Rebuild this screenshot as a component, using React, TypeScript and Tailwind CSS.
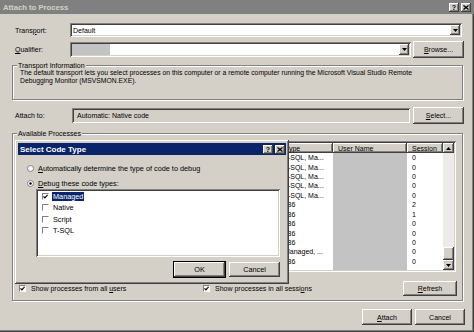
import React from 'react';

const raised =
  'shadow-[inset_-1px_-1px_#404040,inset_1px_1px_#ffffff,inset_-2px_-2px_#808080,inset_2px_2px_#d4d0c8]';
const raisedThin = 'shadow-[inset_-1px_-1px_#404040,inset_1px_1px_#ffffff,inset_-2px_-2px_#808080]';
const sunken =
  'shadow-[inset_1px_1px_#808080,inset_-1px_-1px_#ffffff,inset_2px_2px_#404040,inset_-2px_-2px_#d4d0c8]';
const etched = 'border border-[#808080] shadow-[inset_1px_1px_#ffffff,1px_1px_#ffffff]';

function Btn({ children, className = '' }: { children: React.ReactNode; className?: string }) {
  return (
    <div className={`flex items-center justify-center bg-[#d4d0c8] ${raised} ${className}`}>{children}</div>
  );
}

function DropBtn() {
  return (
    <div className={`flex h-full w-[10px] items-center justify-center bg-[#d4d0c8] ${raisedThin}`}>
      <svg width="5" height="3" viewBox="0 0 5 3">
        <path d="M0 0h5L2.5 3z" fill="#000" />
      </svg>
    </div>
  );
}

function TitleBtn({ kind }: { kind: 'help' | 'close' }) {
  return (
    <div className={`flex h-[9px] w-[10px] items-center justify-center bg-[#d4d0c8] ${raisedThin}`}>
      {kind === 'help' ? (
        <span className="text-[7px] leading-[7px] font-bold text-black">?</span>
      ) : (
        <svg width="6" height="5" viewBox="0 0 6 5">
          <path d="M0.5 0.5l5 4M5.5 0.5l-5 4" stroke="#000" strokeWidth="1.3" />
        </svg>
      )}
    </div>
  );
}

function Check({ checked }: { checked?: boolean }) {
  return (
    <div className="flex h-[7px] w-[7px] shrink-0 items-center justify-center border border-t-[#808080] border-l-[#808080] border-b-[#ffffff] border-r-[#ffffff] bg-white">
      {checked && (
        <svg width="5" height="5" viewBox="0 0 5 5">
          <path d="M0.5 2.3l1.4 1.5L4.6 0.8" stroke="#000" strokeWidth="1.2" fill="none" />
        </svg>
      )}
    </div>
  );
}

function Radio({ on }: { on?: boolean }) {
  return (
    <svg width="7" height="7" viewBox="0 0 7 7" className="shrink-0">
      <circle cx="3.5" cy="3.5" r="3" fill="#fff" stroke="#808080" strokeWidth="1" />
      {on && <circle cx="3.5" cy="3.5" r="1.2" fill="#000" />}
    </svg>
  );
}

// only the Type and Session columns show beside the code type dialog
const rows = [
  ['T-SQL, Ma...', '0'],
  ['T-SQL, Ma...', '0'],
  ['T-SQL, Ma...', '0'],
  ['T-SQL, Ma...', '0'],
  ['T-SQL, Ma...', '0'],
  ['x86', '2'],
  ['x86', '1'],
  ['x86', '0'],
  ['x86', '0'],
  ['x86', '0'],
  ['Managed, ...', '0'],
  ['x86', '0'],
];

function HeaderCell({ w, title }: { w: string; title?: string }) {
  return (
    <div className={`flex h-[10px] shrink-0 items-center bg-[#d4d0c8] pl-[5px] ${raisedThin} ${w}`}>{title}</div>
  );
}

function ProcessList() {
  return (
    <div className={`ml-[4px] mt-[7px] flex h-[131px] w-[439px] bg-white p-[2px] ${sunken}`}>
      {/* Process, ID, Title (under the dialog) */}
      <div className="flex h-full">
        <HeaderCell w="w-[112px]" />
        <HeaderCell w="w-[30px]" />
        <HeaderCell w="w-[119px]" />
      </div>
      <div className="flex h-full w-[53px] flex-col">
        <HeaderCell w="w-full" title="Type" />
        {rows.map((r, i) => (
          <div key={i} className="flex h-[9.43px] items-center whitespace-nowrap pl-[4px]">
            {r[0]}
          </div>
        ))}
      </div>
      <div className="flex h-full w-[74px] flex-col">
        <HeaderCell w="w-full" title="User Name" />
        <div className="flex-1 bg-[#c3c3c3]" />
      </div>
      <div className="flex h-full w-[36px] flex-col">
        <HeaderCell w="w-full" title="Session" />
        {rows.map((r, i) => (
          <div key={i} className="flex h-[9.43px] items-center pl-[5px]">
            {r[1]}
          </div>
        ))}
      </div>
      {/* scrollbar */}
      <div className="flex h-full w-[11px] flex-col">
        <div className={`flex h-[10px] items-center justify-center bg-[#d4d0c8] ${raisedThin}`}>
          <svg width="5" height="3" viewBox="0 0 5 3">
            <path d="M0 3h5L2.5 0z" fill="#000" />
          </svg>
        </div>
        <div className="flex flex-1 flex-col justify-end bg-[#ecebe7]">
          <div className={`h-[13px] bg-[#d4d0c8] ${raisedThin}`} />
        </div>
        <div className={`flex h-[10px] items-center justify-center bg-[#d4d0c8] ${raisedThin}`}>
          <svg width="5" height="3" viewBox="0 0 5 3">
            <path d="M0 0h5L2.5 3z" fill="#000" />
          </svg>
        </div>
      </div>
    </div>
  );
}

function CodeTypeDialog() {
  const items = ['Managed', 'Native', 'Script', 'T-SQL'];
  return (
    <div
      className={`absolute left-[15px] top-[140px] flex h-[144px] w-[274px] flex-col bg-[#d4d0c8] p-[3px] text-[7.3px] ${raised}`}
    >
      <div className="flex h-[12px] items-center bg-[#0a246a] pl-[2px] pr-[1px]">
        <span className="flex-1 text-[8px] font-bold text-white">Select Code Type</span>
        <div className="flex gap-[2px]">
          <TitleBtn kind="help" />
          <TitleBtn kind="close" />
        </div>
      </div>
      <div className="ml-[9px] mt-[9px] flex h-[9px] items-center gap-[4px]">
        <Radio />
        <span>
          <u>A</u>utomatically determine the type of code to debug
        </span>
      </div>
      <div className="ml-[9px] mt-[6px] flex h-[9px] items-center gap-[4px]">
        <Radio on />
        <span>
          <u>D</u>ebug these code types:
        </span>
      </div>
      <div className={`ml-[18px] mt-[1px] flex h-[68px] w-[244px] flex-col bg-white p-[2px] ${sunken}`}>
        {items.map((it, i) => (
          <div key={it} className="flex h-[11.3px] items-center gap-[3px] pl-[4px]">
            <Check checked={i === 0} />
            <span className={`px-[1px] ${i === 0 ? 'bg-[#0a246a] text-white' : ''}`}>{it}</span>
          </div>
        ))}
      </div>
      <div className="mr-[6px] mt-[5px] flex justify-end gap-[4px]">
        <Btn className="h-[15px] w-[51px] outline outline-1 outline-black">OK</Btn>
        <Btn className="h-[15px] w-[51px]">Cancel</Btn>
      </div>
    </div>
  );
}

export default function App() {
  return (
    <div
      className={`relative h-[332px] w-[474px] overflow-hidden bg-[#d4d0c8] font-['Liberation_Sans',Arial,sans-serif] text-[7px] leading-[9px] text-black shadow-[inset_-1px_-1px_#404040,inset_-2px_-2px_#808080]`}
    >
      {/* Title bar */}
      <div className="flex h-[14px] items-center bg-[#808080] pl-[3px] pr-[3px]">
        <span className="flex-1 text-[7.7px] font-bold text-[#d4d0c8]">Attach to Process</span>
        <div className="flex gap-[2px]">
          <TitleBtn kind="help" />
          <TitleBtn kind="close" />
        </div>
      </div>

      {/* Transport */}
      <div className="mt-[9px] flex h-[14px] items-center">
        <span className="ml-[15px] w-[55px]">
          Trans<u>p</u>ort:
        </span>
        <div className={`flex h-[14px] w-[392px] bg-white p-[2px] ${sunken}`}>
          <span className="flex flex-1 items-center pl-[1px]">Default</span>
          <DropBtn />
        </div>
      </div>

      {/* Qualifier */}
      <div className="mt-[4px] flex h-[17px] items-center">
        <span className="ml-[15px] w-[55px]">
          <u>Q</u>ualifier:
        </span>
        <div className={`flex h-[15px] w-[341px] bg-white p-[2px] ${sunken}`}>
          <div className="w-[38px] bg-[#c3c3c3]" />
          <div className="flex-1" />
          <DropBtn />
        </div>
        <Btn className="ml-[2px] h-[17px] w-[51px]">
          <span>
            <u>B</u>rowse...
          </span>
        </Btn>
      </div>

      {/* Transport Information */}
      <div className={`relative ml-[12px] mt-[7px] h-[35px] w-[451px] ${etched}`}>
        <span className="absolute left-[4px] top-[-5px] bg-[#d4d0c8] px-[1px]">Transport Information</span>
        <p className="whitespace-nowrap pl-[7px] pt-[3px] text-[6.8px] leading-[8px]">
          The default transport lets you select processes on this computer or a remote computer running the
          Microsoft Visual Studio Remote
          <br />
          Debugging Monitor (MSVSMON.EXE).
        </p>
      </div>

      {/* Attach to */}
      <div className="mt-[7px] flex h-[17px] items-center">
        <span className="ml-[15px] w-[57px]">Attach to:</span>
        <div className={`flex h-[15px] w-[338px] items-center bg-[#d4d0c8] pl-[5px] ${sunken}`}>
          Automatic: Native code
        </div>
        <Btn className="ml-[3px] h-[17px] w-[51px]">
          <span>
            <u>S</u>elect...
          </span>
        </Btn>
      </div>

      {/* Available Processes */}
      <div className={`relative ml-[12px] mt-[9px] h-[168px] w-[451px] ${etched}`}>
        <span className="absolute left-[4px] top-[-5px] bg-[#d4d0c8] px-[1px]">Available Processes</span>
        <ProcessList />
        <div className="mt-[9px] flex h-[15px] items-center">
          <div className="ml-[6px] flex w-[184px] items-center gap-[5px]">
            <Check checked />
            <span>
              Show processes from all <u>u</u>sers
            </span>
          </div>
          <div className="flex w-[200px] items-center gap-[5px]">
            <Check checked />
            <span>
              Show processes in all sessi<u>o</u>ns
            </span>
          </div>
          <Btn className="h-[15px] w-[54px]">
            <span>
              <u>R</u>efresh
            </span>
          </Btn>
        </div>
      </div>

      {/* Bottom buttons */}
      <div className="mt-[8px] flex justify-end gap-[3px] pr-[9px]">
        <Btn className="h-[16px] w-[50px]">
          <span>
            <u>A</u>ttach
          </span>
        </Btn>
        <Btn className="h-[16px] w-[50px]">Cancel</Btn>
      </div>

      <CodeTypeDialog />
    </div>
  );
}
